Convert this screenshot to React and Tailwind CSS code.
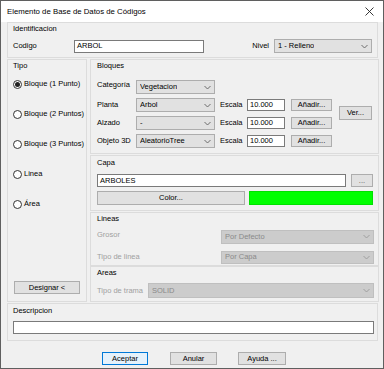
import React from 'react';

const Chevron = ({ color = '#606060' }) => (
  <svg width="7" height="5" viewBox="0 0 7 5" className="shrink-0">
    <path d="M0.5 1 L3.5 4 L6.5 1" fill="none" stroke={color} strokeWidth="0.9" />
  </svg>
);

// Windows style combo box
const Combo = ({ value, className = '', disabled = false }) => (
  <div
    className={`flex items-center justify-between border pl-[3px] pr-[3px] ${
      disabled
        ? 'bg-[#cccccc] border-[#bfbfbf] text-[#8a8a8a]'
        : 'bg-[#e1e1e1] border-[#adadad] text-black'
    } ${className}`}
  >
    <span className="truncate leading-none">{value}</span>
    <Chevron color={disabled ? '#9a9a9a' : '#606060'} />
  </div>
);

const TextBox = ({ value = '', className = '' }) => (
  <div className={`flex items-center bg-white border border-[#7a7a7a] pl-[2px] leading-none ${className}`}>
    {value}
  </div>
);

const Button = ({ children, className = '', focused = false }) => (
  <div
    className={`flex items-center justify-center leading-none border ${
      focused ? 'border-[#0078d7] bg-[#e5f1fb]' : 'border-[#adadad] bg-[#e1e1e1]'
    } ${className}`}
  >
    {children}
  </div>
);

const Radio = ({ label, checked = false }) => (
  <div className="flex items-center h-[10px] gap-[2px] whitespace-nowrap">
    <div className="shrink-0 w-[9px] h-[9px] rounded-full border border-[#333] bg-white flex items-center justify-center">
      {checked && <div className="w-[5px] h-[5px] rounded-full bg-[#222]" />}
    </div>
    <span className="leading-none">{label}</span>
  </div>
);

const Panel = ({ className = '', children }) => (
  <div className={`border border-[#dcdcdc] ${className}`}>{children}</div>
);

const App = () => {
  return (
    <div className="w-[384px] h-[369px] border border-[#5f5f5f] bg-[#f0f0f0] flex flex-col overflow-hidden text-[7.5px] text-black font-['Liberation_Sans',Arial,sans-serif]">
      {/* Title bar */}
      <div className="h-[21px] bg-white flex items-center justify-between pl-[6px] pr-[9px] shrink-0">
        <span className="text-[7.8px] leading-none">Elemento de Base de Datos de Códigos</span>
        <svg width="9" height="9" viewBox="0 0 9 9">
          <path d="M0.5 0.5 L8.5 8.5 M8.5 0.5 L0.5 8.5" stroke="#222" strokeWidth="0.9" />
        </svg>
      </div>

      <div className="flex flex-col pl-[6px] pr-[5px]">
        {/* Identificacion */}
        <Panel className="h-[36px] px-[5px] pt-[1px]">
          <div className="h-[10px] leading-[10px]">Identificacion</div>
          <div className="mt-[5px] flex items-center h-[14px]">
            <span className="w-[61px] leading-none">Codigo</span>
            <TextBox value="ARBOL" className="w-[130px] h-[13px]" />
            <span className="ml-auto mr-[5px] leading-none">Nivel</span>
            <Combo value="1 - Relleno" className="w-[98px] h-[14px]" />
          </div>
        </Panel>

        {/* Middle section */}
        <div className="mt-px flex gap-[3px] h-[243px]">
          {/* Tipo */}
          <Panel className="w-[80px] shrink-0 flex flex-col px-[5px] pt-[1px]">
            <div className="h-[10px] leading-[10px]">Tipo</div>
            <div className="mt-[8px] flex flex-col gap-[20px]">
              <Radio label="Bloque (1 Punto)" checked />
              <Radio label="Bloque (2 Puntos)" />
              <Radio label="Bloque (3 Puntos)" />
              <Radio label="Linea" />
              <Radio label="Área" />
            </div>
            <Button className="mt-auto mb-[7px] ml-px w-[66px] h-[13px]">Designar &lt;</Button>
          </Panel>

          {/* Right column */}
          <div className="flex-1 flex flex-col">
            {/* Bloques */}
            <Panel className="h-[96px] pl-[6px] pr-[5px] pt-[1px]">
              <div className="h-[10px] leading-[10px]">Bloques</div>
              <div className="mt-[9px] flex">
                <div className="flex flex-col gap-[4px]">
                  <div className="flex items-center h-[14px]">
                    <span className="w-[39px] leading-none -mt-[4px]">Categoría</span>
                    <Combo value="Vegetacion" className="w-[79px] h-[14px]" />
                  </div>
                  {[
                    ['Planta', 'Arbol'],
                    ['Alzado', '-'],
                    ['Objeto 3D', 'AleatorioTree'],
                  ].map(([label, val]) => (
                    <div key={label} className="flex items-center h-[14px]">
                      <span className="w-[39px] leading-none">{label}</span>
                      <Combo value={val} className="w-[79px] h-[14px]" />
                      <span className="ml-[5px] w-[27px] leading-none">Escala</span>
                      <TextBox value="10.000" className="w-[38px] h-[12px]" />
                      <Button className="ml-[6px] w-[41px] h-[12px]">Añadir...</Button>
                    </div>
                  ))}
                </div>
                <Button className="ml-[7px] mt-[26px] w-[33px] h-[14px]">Ver...</Button>
              </div>
            </Panel>

            {/* Capa */}
            <Panel className="mt-px h-[56px] pl-[6px] pr-[5px] pt-[1px]">
              <div className="h-[10px] leading-[10px] mt-[1px]">Capa</div>
              <div className="mt-[6px] flex items-center">
                <TextBox value="ARBOLES" className="w-[249px] h-[13px]" />
                <Button className="ml-[5px] w-[22px] h-[13px] text-[#555]">...</Button>
              </div>
              <div className="mt-[4px] flex items-center">
                <Button className="w-[148px] h-[14px]">Color...</Button>
                <div className="ml-[4px] w-[124px] h-[14px] bg-[#00ff00] border border-[#00e000]" />
              </div>
            </Panel>

            {/* Lineas */}
            <Panel className="mt-px h-[55px] pl-[6px] pr-[4px] pt-[1px]">
              <div className="h-[10px] leading-[10px]">Lineas</div>
              <div className="mt-[6px] flex items-center h-[14px]">
                <span className="w-[124px] leading-none text-[#a0a0a0] -mt-[4px]">Grosor</span>
                <Combo value="Por Defecto" disabled className="w-[153px] h-[14px]" />
              </div>
              <div className="mt-[7px] flex items-center h-[13px]">
                <span className="w-[124px] leading-none text-[#a0a0a0]">Tipo de linea</span>
                <Combo value="Por Capa" disabled className="w-[153px] h-[13px]" />
              </div>
            </Panel>

            {/* Areas */}
            <Panel className="h-[36px] pl-[6px] pr-[4px] pt-[1px]">
              <div className="h-[10px] leading-[10px]">Areas</div>
              <div className="mt-[5px] flex items-center h-[15px]">
                <span className="w-[51px] leading-none text-[#a0a0a0] whitespace-nowrap">Tipo de trama</span>
                <Combo value="SOLID" disabled className="w-[226px] h-[15px]" />
              </div>
            </Panel>
          </div>
        </div>

        {/* Descripcion */}
        <Panel className="mt-px h-[38px] px-[5px] pt-[1px]">
          <div className="h-[10px] leading-[10px] mt-[1px]">Descripcion</div>
          <TextBox className="mt-[5px] w-[361px] h-[13px]" />
        </Panel>

        {/* Footer buttons */}
        <div className="mt-[11px] flex items-center h-[13px] pl-[95px]">
          <Button focused className="w-[46px] h-[13px]">Aceptar</Button>
          <Button className="ml-[22px] w-[47px] h-[13px]">Anular</Button>
          <Button className="ml-[21px] w-[48px] h-[13px]">Ayuda ...</Button>
        </div>
      </div>
    </div>
  );
};

export default App;
